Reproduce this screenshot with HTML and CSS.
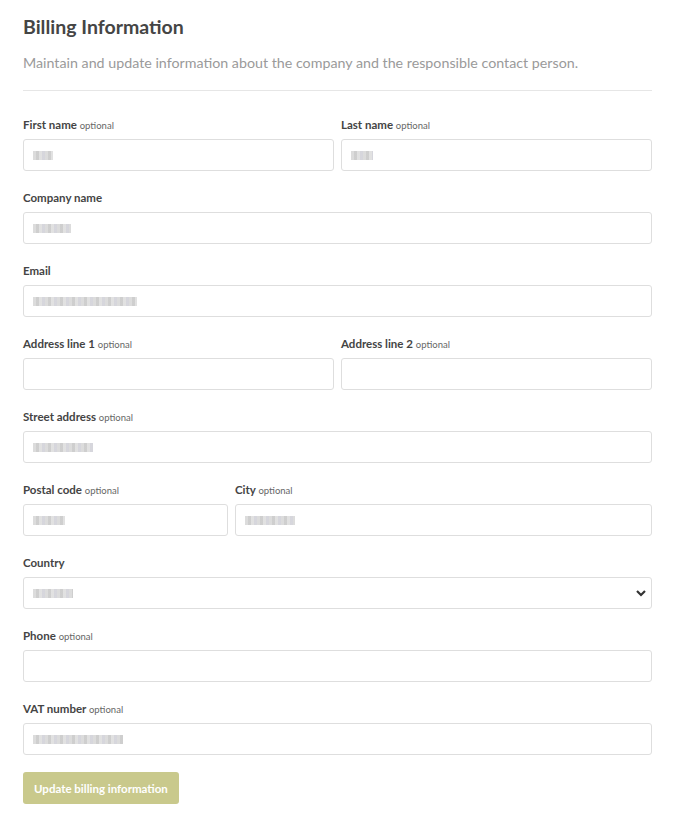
FILE: index.html
```html
<!DOCTYPE html>
<html lang="en">
<head>
<meta charset="utf-8">
<title>Billing Information</title>
<link rel="stylesheet" href="styles.css">
</head>
<body>
<main class="page">
  <h1 class="title">Billing Information</h1>
  <p class="subtitle">Maintain and update information about the company and the responsible contact person.</p>
  <hr class="divider">
  <form class="form">
    <div class="row two">
      <div class="field">
        <label class="label">First name <span class="opt">optional</span></label>
        <div class="input"><span class="redact w20"></span></div>
      </div>
      <div class="field">
        <label class="label">Last name <span class="opt">optional</span></label>
        <div class="input"><span class="redact w22"></span></div>
      </div>
    </div>
    <div class="field">
      <label class="label">Company name</label>
      <div class="input"><span class="redact w38"></span></div>
    </div>
    <div class="field">
      <label class="label">Email</label>
      <div class="input"><span class="redact w104"></span></div>
    </div>
    <div class="row two">
      <div class="field">
        <label class="label">Address line 1 <span class="opt">optional</span></label>
        <div class="input"></div>
      </div>
      <div class="field">
        <label class="label">Address line 2 <span class="opt">optional</span></label>
        <div class="input"></div>
      </div>
    </div>
    <div class="field">
      <label class="label">Street address <span class="opt">optional</span></label>
      <div class="input"><span class="redact w60"></span></div>
    </div>
    <div class="row third">
      <div class="field">
        <label class="label">Postal code <span class="opt">optional</span></label>
        <div class="input"><span class="redact w32"></span></div>
      </div>
      <div class="field">
        <label class="label">City <span class="opt">optional</span></label>
        <div class="input"><span class="redact w50"></span></div>
      </div>
    </div>
    <div class="field">
      <label class="label">Country</label>
      <div class="input select"><span class="redact w40"></span>
        <svg class="chev" width="10" height="8" viewBox="0 0 10 8"><path d="M1 2 L5 6 L9 2" fill="none" stroke="#333" stroke-width="2.2"/></svg>
      </div>
    </div>
    <div class="field">
      <label class="label">Phone <span class="opt">optional</span></label>
      <div class="input"></div>
    </div>
    <div class="field">
      <label class="label">VAT number <span class="opt">optional</span></label>
      <div class="input"><span class="redact w90"></span></div>
    </div>
    <button type="button" class="btn">Update billing information</button>
  </form>
</main>
</body>
</html>
```
FILE: styles.css
```css
* { box-sizing: border-box; }
body {
  margin: 0;
  background: #fff;
  font-family: Lato, "Liberation Sans", sans-serif;
  color: #444;
}
.page {
  padding: 14px 24px 0 23px;
}
.title {
  margin: 0;
  font-size: 19.5px;
  line-height: 26px;
  font-weight: 700;
  color: #454545;
}
.subtitle {
  margin: 13px 0 0;
  font-size: 14.25px;
  line-height: 20px;
  color: #9a9a9a;
}
.divider {
  margin: 17px 0 0;
  border: 0;
  border-top: 1px solid #e6e6e6;
}
.form {
  display: flex;
  flex-direction: column;
  padding-top: 24px;
}
.row {
  display: grid;
  column-gap: 7px;
}
.row.two { grid-template-columns: 1fr 1fr; }
.row.third { grid-template-columns: 205fr 417fr; }
.field {
  display: flex;
  flex-direction: column;
  margin-bottom: 17px;
}
.label {
  display: block;
  height: 20px;
  font-size: 11.5px;
  line-height: 20px;
  font-weight: 700;
  color: #444;
  margin-bottom: 4px;
  white-space: nowrap;
}
.opt {
  font-size: 9.5px;
  line-height: 10px;
  font-weight: 400;
  color: #666;
}
.input {
  height: 32px;
  border: 1px solid #dedede;
  border-radius: 3px;
  background: #fff;
  display: flex;
  align-items: center;
  padding: 0 9px;
}
.select { justify-content: space-between; padding-right: 5px; }
.redact {
  display: block;
  height: 9px;
  background: repeating-linear-gradient(90deg, #d6d6d6 0 3px, #c6c6c6 3px 6px, #dcdcdc 6px 9px, #cfcfd6 9px 12px);
  opacity: 0.85;
}
.w20 { width: 20px; }
.w22 { width: 22px; }
.w32 { width: 32px; }
.w38 { width: 38px; }
.w40 { width: 40px; }
.w50 { width: 50px; }
.w60 { width: 60px; }
.w90 { width: 90px; }
.w104 { width: 104px; }
.btn {
  align-self: flex-start;
  height: 32px;
  padding: 0 11px;
  border: 0;
  border-radius: 3px;
  background: #c9c98c;
  color: #fff;
  font-family: Lato, "Liberation Sans", sans-serif;
  font-size: 11.5px;
  font-weight: 700;
}
```
